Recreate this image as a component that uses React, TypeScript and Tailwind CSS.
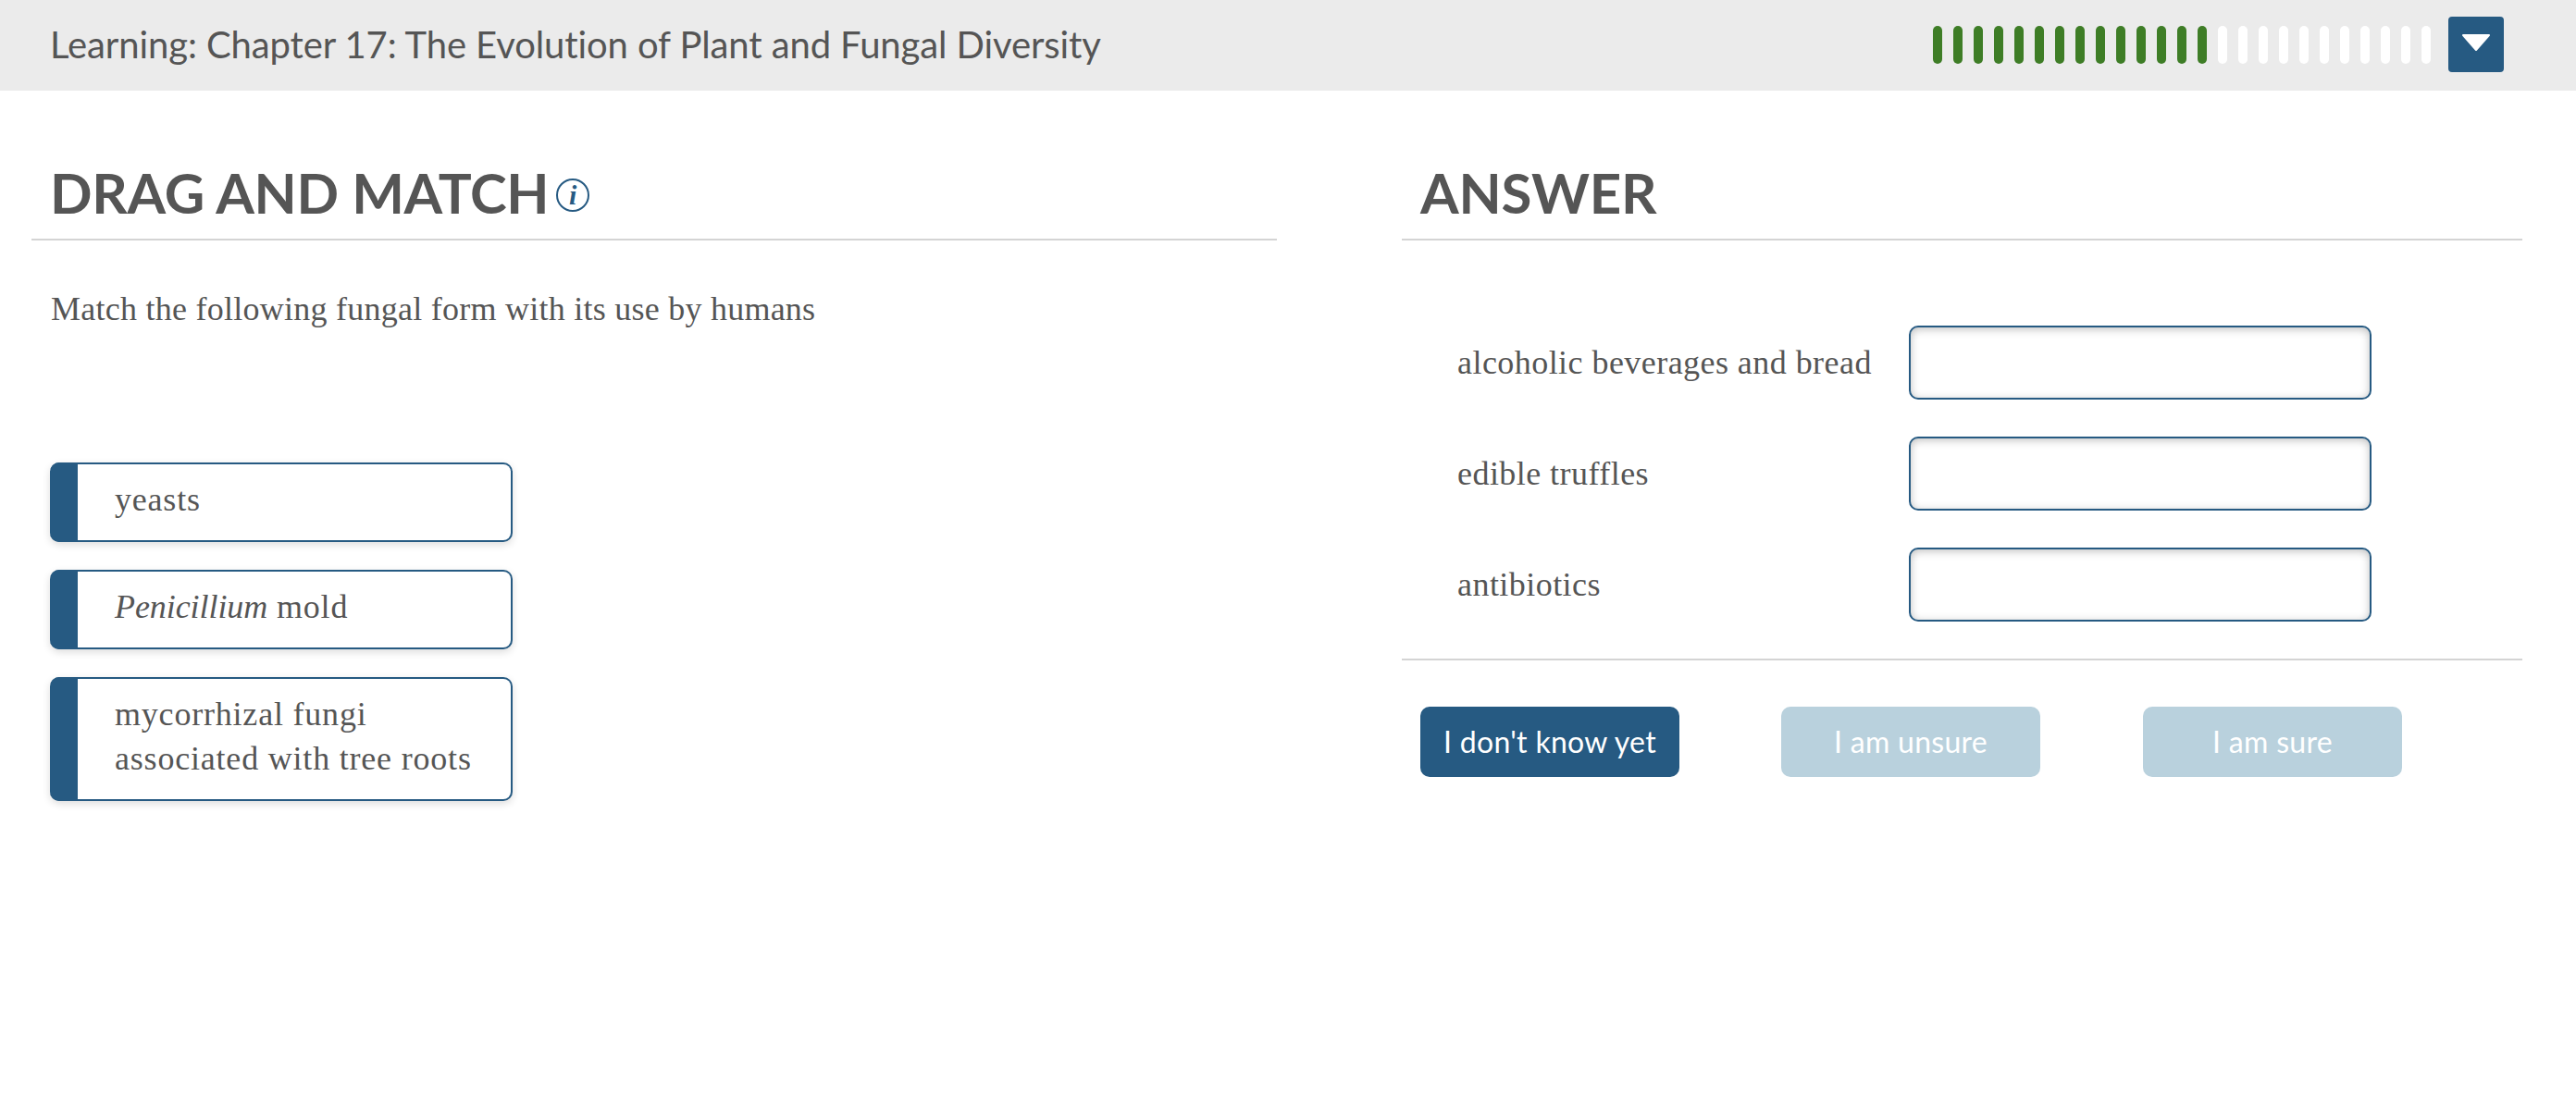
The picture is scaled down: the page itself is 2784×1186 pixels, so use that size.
const serif = "font-['Liberation_Serif',serif]"

const matchItems = ["alcoholic beverages and bread", "edible truffles", "antibiotics"]

function ProgressBars() {
  const ticks = Array.from({ length: 25 }, (_, i) => i < 14)
  return (
    <div className="flex items-center gap-[12px]">
      {ticks.map((done, i) => (
        <div key={i} className={done ? "w-[10px] h-[41px] rounded-[5px] bg-[#3e7d26]" : "w-[10px] h-[41px] rounded-[5px] bg-white"} />
      ))}
    </div>
  )
}

function DragCard({ children }: { children: React.ReactNode }) {
  return (
    <div className="flex w-[500px] rounded-[10px] border-2 border-l-0 border-[#265a82] bg-white shadow-[0_3px_9px_rgba(0,0,0,0.14)]">
      <div className="w-[30px] shrink-0 -my-[2px] rounded-l-[10px] bg-[#265a82]" />
      <div className={`pl-[40px] pt-[14px] pb-[20px] text-[36px] leading-[48px] tracking-[0.8px] text-[#555] ${serif}`}>{children}</div>
    </div>
  )
}

export default function App() {
  return (
    <div className="min-h-[1186px] bg-white font-['Lato',sans-serif] text-[#555]">
      <header className="flex h-[98px] items-center justify-between bg-[#ebebeb] pl-[54px] pr-[78px]">
        <h1 className="mb-[2px] text-[40px] tracking-[-0.1px] text-[#555] [font-variant-ligatures:none]">Learning: Chapter 17: The Evolution of Plant and Fungal Diversity</h1>
        <div className="mb-[2px] flex items-center gap-[19px]">
          <ProgressBars />
          <button className="flex h-[60px] w-[60px] items-center justify-center rounded-[4px] bg-[#265a82]">
            <svg className="mb-[4px]" width="32" height="20" viewBox="0 0 32 20">
              <path d="M2 2 H30 L16 18 Z" fill="white" stroke="white" strokeWidth="2" strokeLinejoin="round" />
            </svg>
          </button>
        </div>
      </header>

      <main className="flex pl-[34px]">
        <section className="w-[1346px]">
          <div className="flex h-[162px] items-end border-b-2 border-[#d4d4d4] pb-[14px] pl-[20px]">
            <h2 className="text-[60px] font-bold leading-[72px] tracking-[-0.3px]">DRAG AND MATCH</h2>
            <div className={`mb-[15px] ml-[8px] flex h-[36px] w-[36px] items-center justify-center rounded-full border-2 border-[#265a82] text-[30px] font-bold italic leading-none text-[#265a82] ${serif}`}>i</div>
          </div>
          <p className={`mt-[50px] pl-[21px] text-[36px] leading-[48px] tracking-[0.25px] ${serif}`}>Match the following fungal form with its use by humans</p>
          <div className="mt-[142px] flex flex-col gap-[30px] pl-[20px]">
            <DragCard>yeasts</DragCard>
            <DragCard><em className="tracking-[-0.07px]">Penicillium</em> mold</DragCard>
            <DragCard>mycorrhizal fungi<br />associated with tree roots</DragCard>
          </div>
        </section>

        <section className="ml-[135px] w-[1211px]">
          <div className="flex h-[162px] items-end border-b-2 border-[#d4d4d4] pb-[14px] pl-[20px]">
            <h2 className="text-[60px] font-bold leading-[72px] tracking-[-0.2px]">ANSWER</h2>
          </div>
          <div className="flex flex-col gap-[40px] border-b-2 border-[#d4d4d4] pb-[40px] pl-[60px] pt-[92px]">
            {matchItems.map((label) => (
              <div key={label} className="flex items-center">
                <div className={`w-[488px] text-[36px] tracking-[0.45px] ${serif}`}>{label}</div>
                <div className="h-[80px] w-[500px] rounded-[10px] border-2 border-[#265a82] bg-white shadow-[inset_0_2px_10px_rgba(0,0,0,0.25)]" />
              </div>
            ))}
          </div>
          <div className="mt-[50px] flex gap-[110px] pl-[20px]">
            <button className="h-[76px] w-[280px] rounded-[10px] bg-[#265a82] text-[32px] tracking-[0.3px] text-white">I don't know yet</button>
            <button className="h-[76px] w-[280px] rounded-[10px] bg-[#b9d1dd] text-[32px] tracking-[0.3px] text-white">I am unsure</button>
            <button className="ml-[1px] h-[76px] w-[280px] rounded-[10px] bg-[#b9d1dd] text-[32px] tracking-[0.3px] text-white">I am sure</button>
          </div>
        </section>
      </main>
    </div>
  )
}
